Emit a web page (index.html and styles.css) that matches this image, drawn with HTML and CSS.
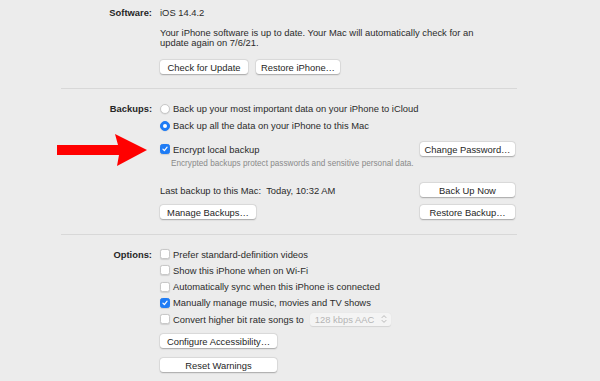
FILE: index.html
```html
<!DOCTYPE html>
<html>
<head>
<meta charset="utf-8">
<link rel="stylesheet" href="styles.css">
</head>
<body>
<div class="panel">
  <section class="section sw">
    <div class="label row24">Software:</div>
    <div class="content">
      <div class="row24">iOS 14.4.2</div>
      <p class="para">Your iPhone software is up to date. Your Mac will automatically check for an<br>update again on 7/6/21.</p>
      <div class="btnrow">
        <span class="btn w88">Check for Update</span>
        <span class="btn w84">Restore iPhone…</span>
      </div>
    </div>
  </section>

  <section class="section bk">
    <div class="label row17">Backups:</div>
    <div class="content bgrid">
      <div class="row17 span"><span class="radio"></span>Back up your most important data on your iPhone to iCloud</div>
      <div class="row17 span"><span class="radio on"></span>Back up all the data on your iPhone to this Mac</div>
      <div class="row16 mt7"><span class="check on"><svg viewBox="0 0 10 10"><path d="M2.4 5.2 L4.2 7.1 L7.6 2.8" fill="none" stroke="#fff" stroke-width="1.5" stroke-linecap="round" stroke-linejoin="round"/></svg></span>Encrypt local backup</div>
      <div class="row16 mt7 right"><span class="btn w95">Change Password…</span></div>
      <div class="row12 span small">Encrypted backups protect passwords and sensitive personal data.</div>
      <div class="row16 mt13">Last backup to this Mac:&nbsp; Today, 10:32 AM</div>
      <div class="row16 mt13 right"><span class="btn w95">Back Up Now</span></div>
      <div class="row16 mt6"><span class="btn w96">Manage Backups…</span></div>
      <div class="row16 mt6 right"><span class="btn w95">Restore Backup…</span></div>
    </div>
  </section>

  <section class="section op">
    <div class="label rowopt">Options:</div>
    <div class="content">
      <div class="rowopt"><span class="check"></span>Prefer standard-definition videos</div>
      <div class="rowopt"><span class="check"></span>Show this iPhone when on Wi-Fi</div>
      <div class="rowopt"><span class="check"></span>Automatically sync when this iPhone is connected</div>
      <div class="rowopt"><span class="check on"><svg viewBox="0 0 10 10"><path d="M2.4 5.2 L4.2 7.1 L7.6 2.8" fill="none" stroke="#fff" stroke-width="1.5" stroke-linecap="round" stroke-linejoin="round"/></svg></span>Manually manage music, movies and TV shows</div>
      <div class="rowopt"><span class="check"></span>Convert higher bit rate songs to <span class="popup">128 kbps AAC<svg class="chev" viewBox="0 0 6 10"><path d="M1 3.6 L3 1.6 L5 3.6 M1 6.4 L3 8.4 L5 6.4" fill="none" stroke="#b8b8b8" stroke-width="1" stroke-linecap="round" stroke-linejoin="round"/></svg></span></div>
      <div class="btnrow mtc"><span class="btn w117">Configure Accessibility…</span></div>
      <div class="btnrow mtr"><span class="btn w117">Reset Warnings</span></div>
    </div>
  </section>
</div>
<svg class="arrow" viewBox="0 0 100 40" width="100" height="40">
  <polygon points="7,15 68,15 65,4 97,20 67,36 69,25 7,25" fill="#ff0000"/>
</svg>
</body>
</html>
```
FILE: styles.css
```css
html, body {
  margin: 0;
  padding: 0;
  background: #ececec;
}
body {
  font-family: "Liberation Sans", Arial, sans-serif;
  font-size: 9.4px;
  color: #2b2b2b;
  width: 600px;
  height: 381px;
  overflow: hidden;
  position: relative;
}
.panel {
  width: 456px;
  margin-left: 61px;
}
.section {
  display: grid;
  grid-template-columns: 91px 1fr;
  column-gap: 8px;
  align-items: start;
}
.sw {
  padding-bottom: 14px;
  border-bottom: 1px solid #d8d8d8;
}
.bk {
  padding-top: 11px;
  padding-bottom: 14px;
  border-bottom: 1px solid #d8d8d8;
}
.op {
  padding-top: 11px;
}
.label {
  text-align: right;
  font-weight: bold;
  justify-content: flex-end;
  color: #262626;
}
.content {
  min-width: 0;
}
.row24, .row17, .row16, .row12, .rowopt {
  display: flex;
  align-items: center;
  white-space: nowrap;
}
.row24 { height: 24px; }
.row17 { height: 17px; }
.row16 { height: 16px; }
.row12 { height: 12px; }
.rowopt { height: 16.25px; }
.para {
  margin: 4px 0 0;
  line-height: 10px;
}
.btnrow {
  display: flex;
  gap: 8px;
  margin-top: 12px;
}
.mtc { margin-top: 6.75px; }
.mtr { margin-top: 10px; }
.btn {
  display: inline-flex;
  align-items: center;
  justify-content: center;
  height: 14px;
  background: #ffffff;
  border-radius: 3px;
  box-shadow: 0 0.5px 1.5px rgba(0,0,0,0.28), 0 0 0 0.5px rgba(0,0,0,0.06);
  color: #262626;
  font-size: 9.4px;
  white-space: nowrap;
}
.w84 { width: 84px; }
.w88 { width: 88px; }
.w95 { width: 95px; }
.w96 { width: 96px; }
.w117 { width: 117px; }
.bgrid {
  display: grid;
  grid-template-columns: 260px 95px;
}
.span { grid-column: 1 / 3; }
.right { justify-content: flex-start; }
.mt7 { margin-top: 7px; }
.mt13 { margin-top: 13px; }
.mt6 { margin-top: 6px; }
.small {
  font-size: 8.2px;
  color: #8a8a8a;
  padding-left: 11px;
}
.radio, .check {
  display: inline-flex;
  align-items: center;
  justify-content: center;
  width: 10px;
  height: 10px;
  box-sizing: border-box;
  background: #fff;
  border: 0.5px solid #c8c8c8;
  box-shadow: 0 0.5px 1px rgba(0,0,0,0.12);
  margin-right: 3px;
  flex: none;
}
.radio { border-radius: 50%; }
.radio.on {
  background: #1f7cf5;
  border-color: #1f7cf5;
}
.radio.on::after {
  content: "";
  width: 4px;
  height: 4px;
  border-radius: 50%;
  background: #fff;
}
.check { border-radius: 2.5px; }
.check.on {
  background: #1f7cf5;
  border-color: #1f7cf5;
}
.check svg {
  width: 10px;
  height: 10px;
}
.popup {
  display: inline-flex;
  align-items: center;
  justify-content: space-between;
  width: 81px;
  height: 13px;
  box-sizing: border-box;
  margin-left: 6px;
  padding: 0 4px 0 5px;
  background: #f4f4f4;
  border-radius: 3px;
  box-shadow: 0 0.5px 1px rgba(0,0,0,0.1);
  color: #b4b4b4;
  font-size: 9.4px;
}
.chev {
  width: 6px;
  height: 10px;
}
.arrow {
  position: absolute;
  left: 50px;
  top: 130px;
}
```
